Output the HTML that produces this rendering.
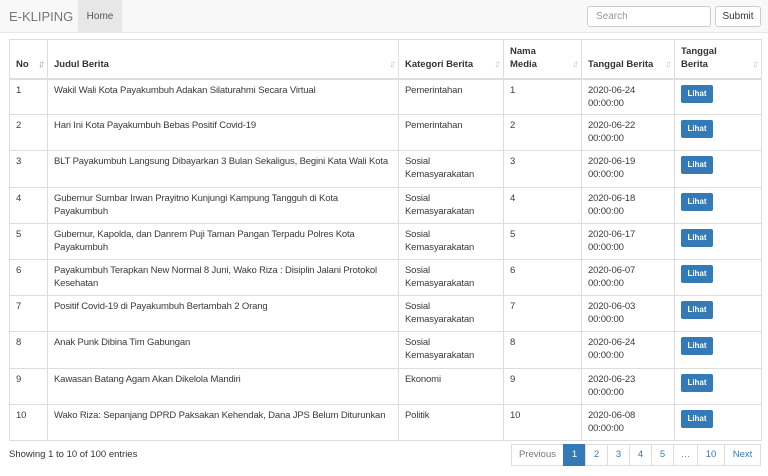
<!DOCTYPE html>
<html><head><style>
*{box-sizing:border-box;margin:0;padding:0}
body{width:768px;height:476px;background:#fff;font-family:"Liberation Sans",sans-serif;font-size:9.5px;color:#333;position:relative;overflow:hidden}
.nav{position:absolute;left:0;top:0;width:768px;height:33px;background:#f8f8f8;border-bottom:1px solid #e7e7e7}
.brand{position:absolute;left:9px;top:9px;font-size:13px;color:#777}
.home{position:absolute;left:78px;top:0;width:44px;height:33px;background:#e7e7e7;color:#555;font-size:10px;padding-top:11px;text-align:center}
.search{position:absolute;left:587px;top:6px;width:124px;height:21px;border:1px solid #ccc;border-radius:3px;background:#fff;color:#999;padding:4px 8px;font-size:10px}
.submit{position:absolute;left:715px;top:6px;width:46px;height:21px;border:1px solid #ccc;border-radius:3px;background:#fff;padding:4px 0;text-align:center;font-size:10px}
table{position:absolute;left:9px;top:39px;width:752px;border-collapse:collapse;table-layout:fixed}
td,th{border:1px solid #ddd;vertical-align:top;padding:4px 6px 0;line-height:13px;text-align:left;position:relative;overflow:hidden}
td{letter-spacing:-0.15px;color:#3a3a3a}
th{vertical-align:bottom;border-bottom:2px solid #ddd;font-weight:bold;padding-bottom:7px}
tr.h{height:39px}
tr{height:36.2px}
th:after{content:"\2193\2191";position:absolute;right:5px;bottom:7px;color:#c8c8c8;font-size:10px;letter-spacing:-3px;font-weight:normal}
th.s:after{color:#999}
.b{display:inline-block;background:#337ab7;color:#fff;font-size:8px;font-weight:bold;width:32px;height:18px;line-height:18px;text-align:center;border-radius:2px;margin-top:1px;letter-spacing:0}
.info{position:absolute;left:9px;top:449px}
.pg{position:absolute;left:511px;top:444px;display:flex;height:22px}
.pg span{border:1px solid #ddd;margin-left:-1px;color:#337ab7;line-height:20px;text-align:center}
.pg .a{background:#337ab7;color:#fff;border-color:#337ab7}
.pg .d{color:#777}
</style></head><body>
<div class="nav"><div class="brand">E-KLIPING</div><div class="home">Home</div><div class="search">Search</div><div class="submit">Submit</div></div>
<table>
<colgroup><col style="width:38px"><col style="width:351px"><col style="width:105px"><col style="width:78px"><col style="width:93px"><col style="width:87px"></colgroup>
<tr class="h"><th class="s">No</th><th>Judul Berita</th><th>Kategori Berita</th><th>Nama<br>Media</th><th>Tanggal Berita</th><th>Tanggal<br>Berita</th></tr>
<tr><td>1</td><td>Wakil Wali Kota Payakumbuh Adakan Silaturahmi Secara Virtual</td><td>Pemerintahan</td><td>1</td><td>2020-06-24<br>00:00:00</td><td><span class="b">Lihat</span></td></tr>
<tr><td>2</td><td>Hari Ini Kota Payakumbuh Bebas Positif Covid-19</td><td>Pemerintahan</td><td>2</td><td>2020-06-22<br>00:00:00</td><td><span class="b">Lihat</span></td></tr>
<tr><td>3</td><td style="white-space:nowrap">BLT Payakumbuh Langsung Dibayarkan 3 Bulan Sekaligus, Begini Kata Wali Kota</td><td>Sosial<br>Kemasyarakatan</td><td>3</td><td>2020-06-19<br>00:00:00</td><td><span class="b">Lihat</span></td></tr>
<tr><td>4</td><td>Gubernur Sumbar Irwan Prayitno Kunjungi Kampung Tangguh di Kota<br>Payakumbuh</td><td>Sosial<br>Kemasyarakatan</td><td>4</td><td>2020-06-18<br>00:00:00</td><td><span class="b">Lihat</span></td></tr>
<tr><td>5</td><td>Gubernur, Kapolda, dan Danrem Puji Taman Pangan Terpadu Polres Kota<br>Payakumbuh</td><td>Sosial<br>Kemasyarakatan</td><td>5</td><td>2020-06-17<br>00:00:00</td><td><span class="b">Lihat</span></td></tr>
<tr><td>6</td><td>Payakumbuh Terapkan New Normal 8 Juni, Wako Riza : Disiplin Jalani Protokol<br>Kesehatan</td><td>Sosial<br>Kemasyarakatan</td><td>6</td><td>2020-06-07<br>00:00:00</td><td><span class="b">Lihat</span></td></tr>
<tr><td>7</td><td>Positif Covid-19 di Payakumbuh Bertambah 2 Orang</td><td>Sosial<br>Kemasyarakatan</td><td>7</td><td>2020-06-03<br>00:00:00</td><td><span class="b">Lihat</span></td></tr>
<tr><td>8</td><td>Anak Punk Dibina Tim Gabungan</td><td>Sosial<br>Kemasyarakatan</td><td>8</td><td>2020-06-24<br>00:00:00</td><td><span class="b">Lihat</span></td></tr>
<tr><td>9</td><td>Kawasan Batang Agam Akan Dikelola Mandiri</td><td>Ekonomi</td><td>9</td><td>2020-06-23<br>00:00:00</td><td><span class="b">Lihat</span></td></tr>
<tr><td>10</td><td style="white-space:nowrap">Wako Riza: Sepanjang DPRD Paksakan Kehendak, Dana JPS Belum Diturunkan</td><td>Politik</td><td>10</td><td>2020-06-08<br>00:00:00</td><td><span class="b">Lihat</span></td></tr>
</table>
<div class="info">Showing 1 to 10 of 100 entries</div>
<div class="pg"><span class="d" style="width:53px;margin-left:0">Previous</span><span class="a" style="width:23px">1</span><span style="width:23px">2</span><span style="width:23px">3</span><span style="width:23px">4</span><span style="width:23px">5</span><span class="d" style="width:25px">…</span><span style="width:28px">10</span><span style="width:37px">Next</span></div>
</body></html>
